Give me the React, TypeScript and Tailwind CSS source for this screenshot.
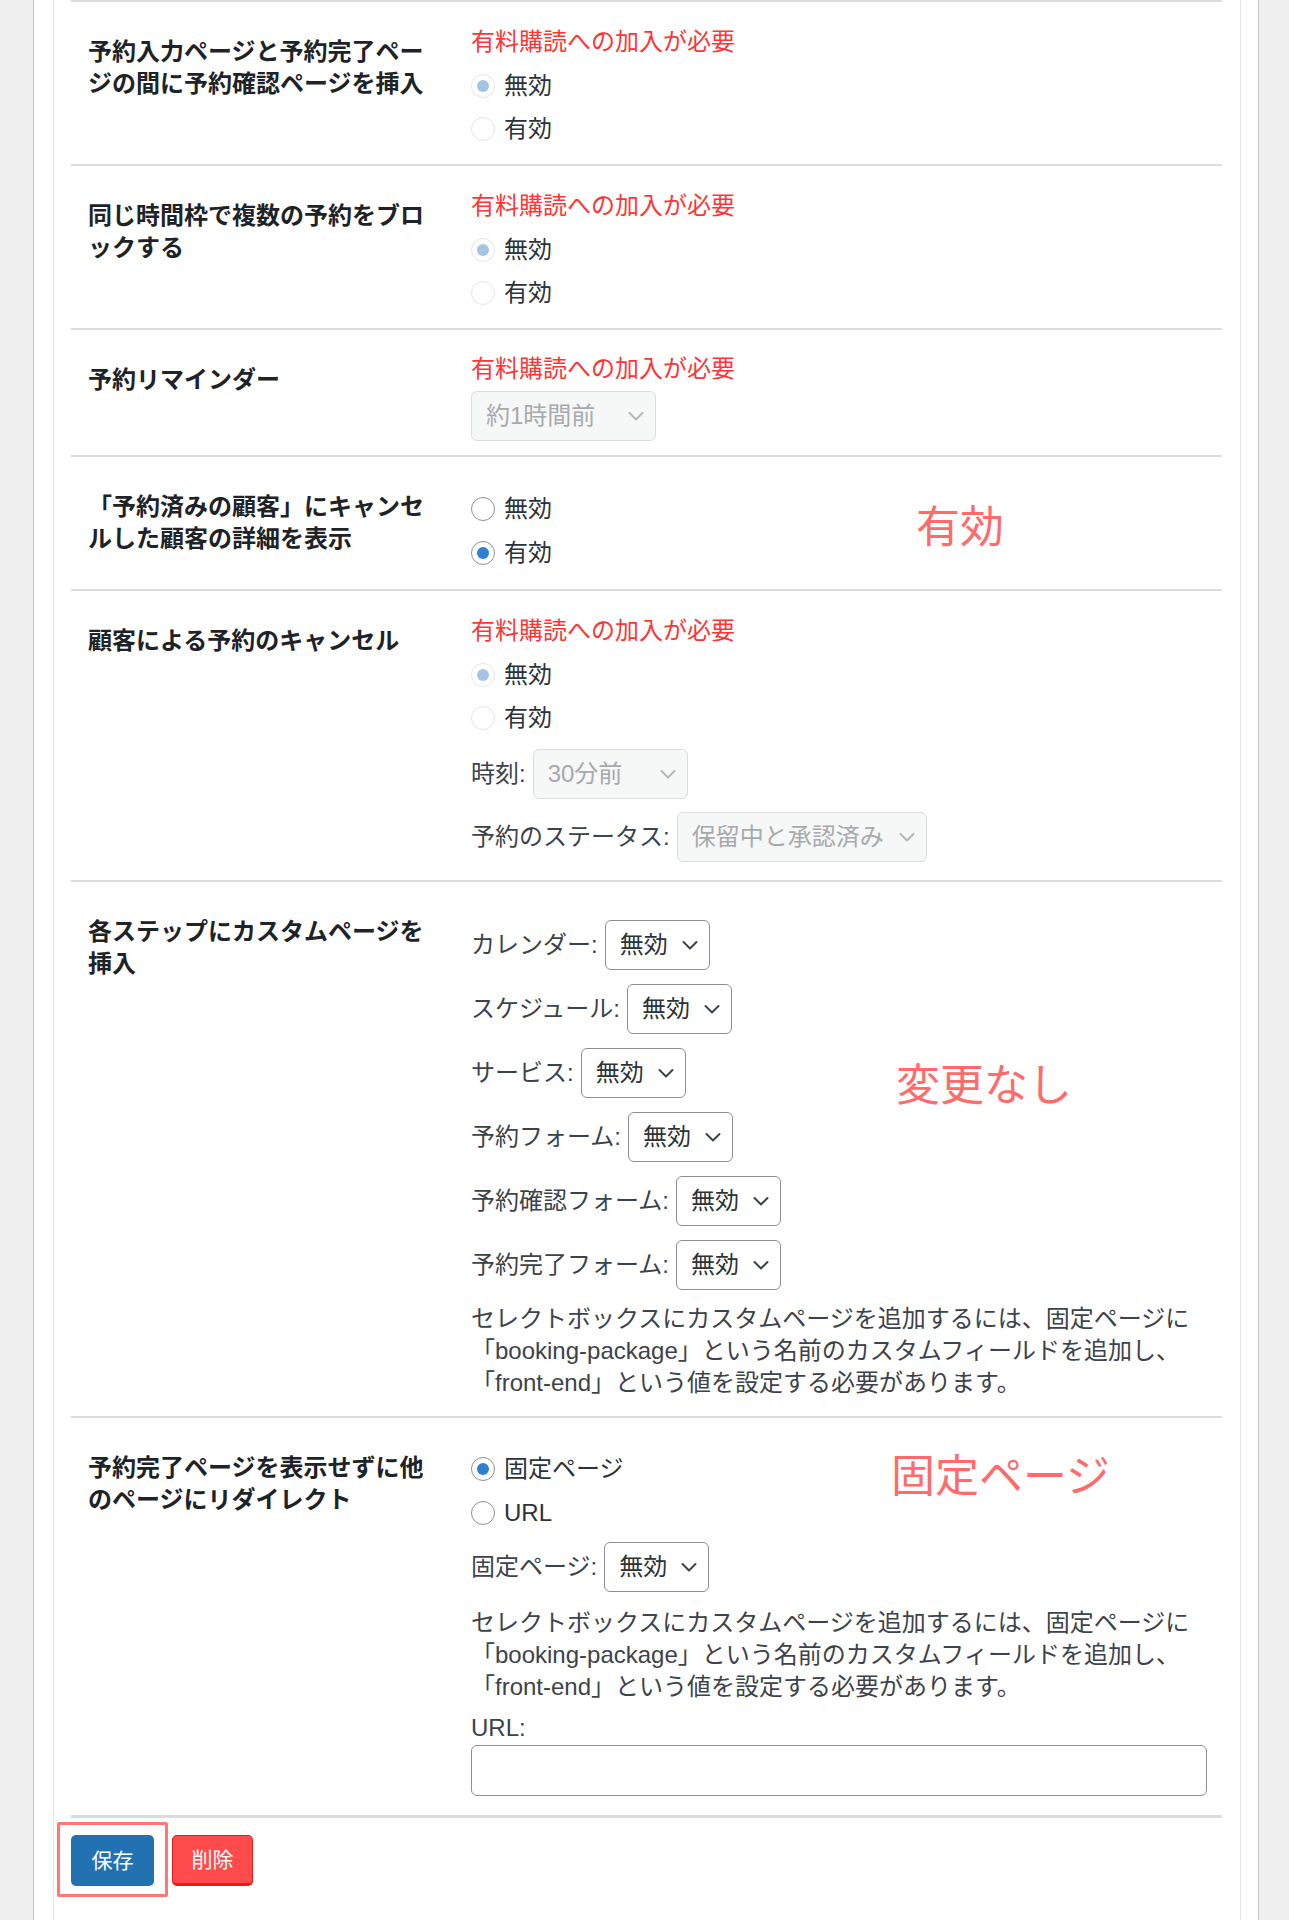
import clsx from "clsx";
import type { ReactNode } from "react";

const font = "font-['Liberation_Sans','Noto_Sans_CJK_JP',sans-serif]";

function Chevron({ disabled }: { disabled?: boolean }) {
  return (
    <svg
      viewBox="0 0 18 18"
      className="h-[18px] w-[18px] shrink-0"
      fill="none"
      stroke={disabled ? "#b4b6b9" : "#3c434a"}
      strokeWidth={2}
      strokeLinecap="round"
      strokeLinejoin="round"
    >
      <polyline points="2.5 6 9 12.5 15.5 6" />
    </svg>
  );
}

function Select({
  value,
  width,
  disabled,
}: {
  value: string;
  width: string;
  disabled?: boolean;
}) {
  return (
    <div
      className={clsx(
        "flex h-[50px] shrink-0 items-center justify-between rounded-[6px] border-[1.5px] pl-[14px] pr-[10px]",
        width,
        disabled
          ? "border-[#dcdcde] bg-[#f6f7f7] text-[#a7aaad]"
          : "border-[#8c8f94] bg-white text-[#2c3338]"
      )}
    >
      <span className="whitespace-nowrap">{value}</span>
      <Chevron disabled={disabled} />
    </div>
  );
}

function Radio({
  label,
  checked,
  disabled,
  tall,
}: {
  label: string;
  checked?: boolean;
  disabled?: boolean;
  tall?: boolean;
}) {
  return (
    <div className={clsx("flex items-center gap-[9px]", tall ? "h-[44px]" : "h-[43px]")}>
      <span
        className={clsx(
          "flex h-[24px] w-[24px] shrink-0 items-center justify-center rounded-full border-[1.5px] bg-white",
          disabled ? "border-[#e3e4e6]" : "border-[#8c8f94]"
        )}
      >
        {checked && (
          <span
            className={clsx(
              "h-[12px] w-[12px] rounded-full",
              disabled ? "bg-[#a4c4e6]" : "bg-[#2f80cf]"
            )}
          />
        )}
      </span>
      <span className="text-[#2c3338]">{label}</span>
    </div>
  );
}

function Paid() {
  return <p className="mb-[6px] text-[#ff3535]">有料購読への加入が必要</p>;
}

function Field({ label, children }: { label: string; children: ReactNode }) {
  return (
    <div className="flex items-center gap-[7px]">
      <span className="whitespace-nowrap text-[#3c434a]">{label}</span>
      {children}
    </div>
  );
}

// callouts drawn over the screenshot
function Note({ label, className }: { label: string; className: string }) {
  return (
    <span
      className={clsx(
        "absolute whitespace-nowrap text-[44px] leading-[52px] text-[#ff6b6b]",
        className
      )}
    >
      {label}
    </span>
  );
}

function Row({
  label,
  td,
  children,
}: {
  label: string;
  td: string;
  children: ReactNode;
}) {
  return (
    <div className="flex border-t-2 border-[#dcdcde]">
      <div className="w-[400px] shrink-0 pl-[17px] pr-[38px] pt-[34px] font-bold text-[#1d2327]">
        {label}
      </div>
      <div className={clsx("relative flex-1 pr-[15px]", td)}>{children}</div>
    </div>
  );
}

const customPageNote = (
  <p className="text-[#3c434a]">
    セレクトボックスにカスタムページを追加するには、固定ページに「booking-package」という名前のカスタムフィールドを追加し、「front-end」という値を設定する必要があります。
  </p>
);

const steps = [
  "カレンダー:",
  "スケジュール:",
  "サービス:",
  "予約フォーム:",
  "予約確認フォーム:",
  "予約完了フォーム:",
];

export default function App() {
  return (
    <div
      className={clsx(
        "flex min-h-[1920px] bg-[#f0f0f1] pl-[33px] pr-[30px] text-[24px] leading-[32px]",
        font
      )}
    >
      <div className="flex flex-1 border-x border-[#c3c4c7] bg-white pl-[19px] pr-[17px]">
        <div className="flex-1 border-x border-[#e4e5e7] pl-[17px] pr-[18px]">
          <Row label="予約入力ページと予約完了ページの間に予約確認ページを挿入" td="pt-[24px] pb-[14px]">
            <Paid />
            <Radio label="無効" checked disabled />
            <Radio label="有効" disabled />
          </Row>

          <Row label="同じ時間枠で複数の予約をブロックする" td="pt-[24px] pb-[14px]">
            <Paid />
            <Radio label="無効" checked disabled />
            <Radio label="有効" disabled />
          </Row>

          <Row label="予約リマインダー" td="pt-[23px] pb-[14px]">
            <Paid />
            <Select value="約1時間前" width="w-[185px]" disabled />
          </Row>

          <Row label="「予約済みの顧客」にキャンセルした顧客の詳細を表示" td="pt-[30px] pb-[14px]">
            <Radio label="無効" tall />
            <Radio label="有効" checked tall />
            <Note label="有効" className="left-[445px] top-[45px]" />
          </Row>

          <Row label="顧客による予約のキャンセル" td="pt-[24px] pb-[18px]">
            <Paid />
            <Radio label="無効" checked disabled />
            <Radio label="有効" disabled />
            <div className="mt-[10px]">
              <Field label="時刻:">
                <Select value="30分前" width="w-[155px]" disabled />
              </Field>
            </div>
            <div className="mt-[13px]">
              <Field label="予約のステータス:">
                <Select value="保留中と承認済み" width="w-[250px]" disabled />
              </Field>
            </div>
          </Row>

          <Row label="各ステップにカスタムページを挿入" td="pt-[38px] pb-[17px]">
            <div className="flex flex-col gap-[14px]">
              {steps.map((step) => (
                <Field key={step} label={step}>
                  <Select value="無効" width="w-[105px]" />
                </Field>
              ))}
            </div>
            <div className="mt-[13px]">{customPageNote}</div>
            <Note label="変更なし" className="left-[425px] top-[178px]" />
          </Row>

          <Row label="予約完了ページを表示せずに他のページにリダイレクト" td="pt-[29px] pb-[19px]">
            <Radio label="固定ページ" checked tall />
            <Radio label="URL" tall />
            <div className="mt-[7px]">
              <Field label="固定ページ:">
                <Select value="無効" width="w-[105px]" />
              </Field>
            </div>
            <div className="mt-[15px]">{customPageNote}</div>
            <p className="mt-[9px] text-[#3c434a]">URL:</p>
            <div className="mt-[1px] h-[51px] rounded-[6px] border-[1.5px] border-[#8c8f94] bg-white" />
            <Note label="固定ページ" className="left-[420px] top-[33px]" />
          </Row>

          <div className="border-t-[3px] border-[#dcdcde] pt-[17px]">
            <div className="flex items-center gap-[18px]">
              <div className="relative">
                <button
                  type="button"
                  className="flex h-[51px] w-[83px] items-center justify-center rounded-[5px] bg-[#2271b1] text-[21px] text-white"
                >
                  保存
                </button>
                <span className="pointer-events-none absolute -bottom-[11px] -left-[14px] -right-[14px] -top-[13px] rounded-[2px] border-[3px] border-[#ff7777]" />
              </div>
              <button
                type="button"
                className="flex h-[51px] w-[81px] items-center justify-center rounded-[5px] border border-b-[3px] border-[#e41c1c] bg-[#ff4b4b] text-[21px] text-white"
              >
                削除
              </button>
            </div>
          </div>
        </div>
      </div>
    </div>
  );
}
